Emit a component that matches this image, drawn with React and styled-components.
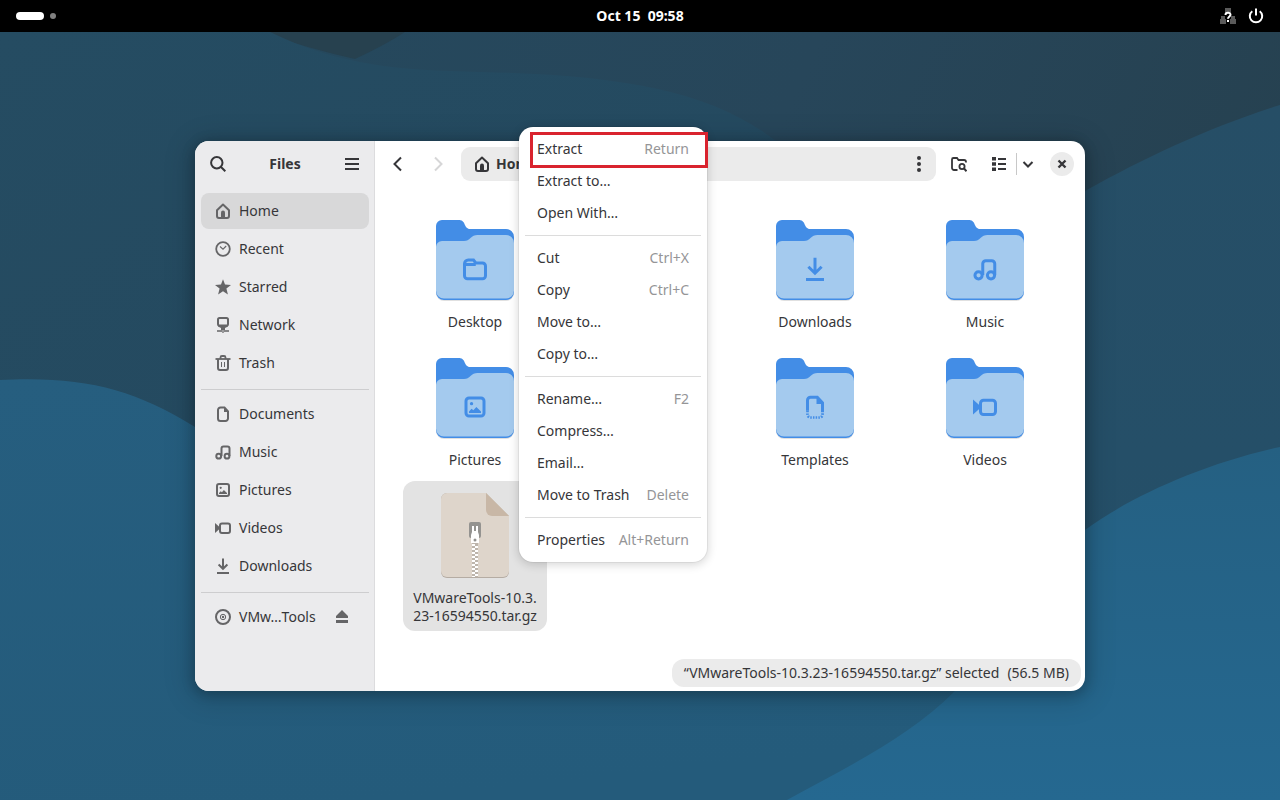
import React, { useState } from "react"
import styled, { createGlobalStyle } from "styled-components"

const places = [
  { title: "Home", icon: "home" },
  { title: "Recent", icon: "recent" },
  { title: "Starred", icon: "star" },
  { title: "Network", icon: "network" },
  { title: "Trash", icon: "trash" },
]

const bookmarks = [
  { title: "Documents", icon: "document" },
  { title: "Music", icon: "music" },
  { title: "Pictures", icon: "picture" },
  { title: "Videos", icon: "video" },
  { title: "Downloads", icon: "download" },
]

const folders = [
  { title: "Desktop", icon: "folder" },
  { title: "Documents", icon: "document" },
  { title: "Downloads", icon: "download" },
  { title: "Music", icon: "music" },
  { title: "Pictures", icon: "picture" },
  { title: "Public", icon: "folder" },
  { title: "Templates", icon: "template" },
  { title: "Videos", icon: "video" },
]

const menuGroups = [
  [
    { title: "Extract", keys: "Return", marked: true },
    { title: "Extract to…" },
    { title: "Open With…" },
  ],
  [
    { title: "Cut", keys: "Ctrl+X" },
    { title: "Copy", keys: "Ctrl+C" },
    { title: "Move to…" },
    { title: "Copy to…" },
  ],
  [
    { title: "Rename…", keys: "F2" },
    { title: "Compress…" },
    { title: "Email…" },
    { title: "Move to Trash", keys: "Delete" },
  ],
  [{ title: "Properties", keys: "Alt+Return" }],
]

// 16x16 symbolic icons, drawn with currentColor
const glyphs = {
  home: (
    <>
      <path d="M2 7.2 8 1.6l6 5.6V13a2 2 0 0 1-2 2H4a2 2 0 0 1-2-2z" strokeLinejoin="round" />
      <path d="M6 15V9.5a2 2 0 0 1 4 0V15z" fill="currentColor" stroke="none" />
    </>
  ),
  recent: (
    <>
      <circle cx="8" cy="8" r="6.8" strokeWidth="1.8" />
      <path d="m5 5.5 3 2.7 3.2-3.2" strokeWidth="1.1" />
    </>
  ),
  star: (
    <path d="M8 .3 10 5.6l6 .3-4.6 3.7 1.5 6L8 12.2l-4.9 3.4 1.5-6L0 5.9l6-.3z" fill="currentColor" stroke="none" />
  ),
  network: (
    <>
      <rect x="3" y="1" width="10" height="7.5" rx="1.5" />
      <path d="M3 8h10v1.500L10 11v2H6v-2L3 9.500z" fill="currentColor" stroke="none" />
      <path d="M2 14h4.5M9.5 14H14" strokeWidth="1.5" />
      <circle cx="8" cy="14" r="1.3" strokeWidth="1" />
    </>
  ),
  trash: (
    <>
      <path d="M.5 4h15" strokeWidth="1.8" />
      <path d="M5.5 4V2.5A1.500 1.500 0 0 1 7 1h2a1.500 1.500 0 0 1 1.500 1.500V4" strokeWidth="1.8" />
      <path d="M3 4v9a2 2 0 0 0 2 2h6a2 2 0 0 0 2-2V4" />
      <path d="M6.500 7v5M9.500 7v5" strokeWidth="1" />
    </>
  ),
  document: (
    <>
      <path d="M3 4a2.500 2.500 0 0 1 2.500-2.500H9.500L13 5.300V12.500A2.500 2.500 0 0 1 10.500 15h-5A2.500 2.500 0 0 1 3 12.500z" />
      <path d="M9 2v4h4.500z" fill="currentColor" stroke="none" />
    </>
  ),
  template: (
    <>
      <path d="M3 10.500V3.500A2 2 0 0 1 5 1.500h4.500L13 5.300v6.200" />
      <path d="M9 2v4h4.500z" fill="currentColor" stroke="none" />
      <path d="M3 10.500v2.500a2 2 0 0 0 2 2h6a2 2 0 0 0 2-2v-1.500" strokeWidth="1.800" strokeDasharray="1 .8" />
    </>
  ),
  music: (
    <>
      <circle cx="3.7" cy="12.200" r="2.400" />
      <circle cx="12" cy="12.200" r="2.400" />
      <path d="M6.500 12V4.500a2 2 0 0 1 2-2h4a2 2 0 0 1 2 2V12" />
    </>
  ),
  picture: (
    <>
      <rect x="2" y="2" width="12" height="12" rx="2" />
      <circle cx="5.7" cy="5.800" r="1.100" fill="currentColor" stroke="none" />
      <path d="M4 12v-1l1.700-1.800 1.200 1 2-2.200 1.200 1.200 1.900 1.800v1z" fill="currentColor" stroke="none" />
    </>
  ),
  video: (
    <>
      <rect x="5" y="3.500" width="10" height="9.500" rx="2" />
      <path d="M0 3v10l4.500-4V7z" fill="currentColor" stroke="none" />
    </>
  ),
  download: (
    <>
      <path d="M8 .5v10M3.600 6.500 8 10.800l4.400-4.300" />
      <path d="M2 15h12" />
    </>
  ),
  folder: (
    <path d="M1 4.500A2.500 2.500 0 0 1 3.500 2H7l1.500 2H13a2 2 0 0 1 2 2v6.500a2 2 0 0 1-2 2H3a2 2 0 0 1-2-2zM1.500 5h7" />
  ),
  disc: (
    <>
      <circle cx="8" cy="8" r="7" />
      <circle cx="8" cy="8" r="2.700" strokeWidth="1" />
      <circle cx="8" cy="8" r="1.200" fill="currentColor" stroke="none" />
    </>
  ),
  eject: (
    <path d="M8 1 14 7v2H2V7zM2 11h12v3H2z" fill="currentColor" stroke="none" />
  ),
  search: (
    <>
      <circle cx="6.800" cy="6.800" r="5.700" />
      <path d="m11 11 4.300 4.300" />
    </>
  ),
  menu: <path d="M1 3h14M1 8h14M1 13h14" />,
  back: <path d="M11 1.500 4.500 8l6.500 6.500" />,
  forward: <path d="M5 1.500 11.500 8 5 14.500" />,
  more: (
    <g fill="currentColor" stroke="none">
      <circle cx="8" cy="2" r="2" />
      <circle cx="8" cy="8" r="2" />
      <circle cx="8" cy="14" r="2" />
    </g>
  ),
  folderSearch: (
    <>
      <path d="M6.500 14H3a2 2 0 0 1-2-2V3.500A1.500 1.500 0 0 1 2.500 2H6l1.500 2H13a2 2 0 0 1 2 2v.5" strokeWidth="1.800" />
      <circle cx="11" cy="10.500" r="2.600" strokeWidth="1.800" />
      <path d="m13 12.500 2.500 2.700" />
    </>
  ),
  list: (
    <>
      <path d="M7 3h8M7 8h8M7 13h8" />
      <path d="M1 1h4v3.600H1zM1 6.200h4v3.600H1zM1 11.400h4V15H1z" fill="currentColor" stroke="none" />
    </>
  ),
  down: <path d="M3.500 6 8 10.500 12.500 6" />,
  close: <path d="m4.500 4.500 7 7M11.500 4.500l-7 7" strokeWidth="2.400" />,
  power: (
    <>
      <path d="M4.300 3.200a6.200 6.200 0 1 0 7.400 0" />
      <path d="M8 .5v7" />
    </>
  ),
}

const Glyph = ({ name, size = 16, ...rest }) => (
  <svg width={size} height={size} viewBox="0 0 16 16" fill="none" stroke="currentColor" strokeWidth="2" aria-hidden="true" {...rest}>
    {glyphs[name]}
  </svg>
)

const WiredUnknown = () => (
  <svg width="16" height="16" viewBox="0 0 16 16" aria-hidden="true">
    <path d="M5 0h6v5H5zM1 8h4v3h1v5H0v-5h1zM11 8h4v3h1v5h-6v-5h1z" fill="#5a5a5a" />
    <path d="M5.500 7C5.500 4 10.500 4 10.500 6.800 10.500 8.500 8 8.500 8 10.800" fill="none" stroke="#fff" strokeWidth="2" />
    <path d="M7 12h2v2H7z" fill="#fff" />
  </svg>
)

const FolderArt = ({ icon }) => (
  <svg width="96" height="96" viewBox="0 0 96 96" aria-hidden="true">
    <path d="M9 82V30h78v52a8 8 0 0 1-8 8H17a8 8 0 0 1-8-8z" fill="#000" opacity=".12" />
    <path d="M9 81V15a6 6 0 0 1 6-6h16c4 0 5.500 1.500 6.500 4s2.500 5 5.500 5H79a8 8 0 0 1 8 8v55a8 8 0 0 1-8 8H17a8 8 0 0 1-8-8z" fill="#438de6" />
    <path d="M9 79V36a6 6 0 0 1 6-6h22c3 0 4.500-1 6.500-3s4-3 7-3H79a8 8 0 0 1 8 8v47.500a8 8 0 0 1-8 8H17a8 8 0 0 1-8-8z" fill="#a4caee" />
    <Glyph name={icon} size={24} x="36" y="46" color="#438de6" />
  </svg>
)

const ArchiveArt = () => (
  <svg width="96" height="96" viewBox="0 0 96 96" aria-hidden="true">
    <path d="M14 12a6 6 0 0 1 6-6h39l23 23v56a6 6 0 0 1-6 6H20a6 6 0 0 1-6-6z" fill="#b5aca3" />
    <path d="M14 12a6 6 0 0 1 6-6h39l23 23v55a6 6 0 0 1-6 6H20a6 6 0 0 1-6-6z" fill="#ded5cb" />
    <path d="M59 6v17a6 6 0 0 0 6 6h17z" fill="#c8b7a6" />
    <path d="M42 37a2 2 0 0 1 2-2h8a2 2 0 0 1 2 2v12a2 2 0 0 1-2 2h-8a2 2 0 0 1-2-2z" fill="#949390" />
    <path d="M45 56h6v34h-6z" fill="#bdb5ac" />
    <path d="M46.500 57v33" stroke="#fff" strokeWidth="3" strokeDasharray="2 2" />
    <path d="M49.500 59v31" stroke="#fff" strokeWidth="3" strokeDasharray="2 2" />
    <path d="M45 39h2v5h2v-5h2v6l1 3v8h-8v-8l1-3z" fill="#fff" />
    <circle cx="48" cy="53" r="1.500" fill="#949390" />
  </svg>
)

const Wallpaper = () => (
  <Backdrop viewBox="0 0 1280 800" preserveAspectRatio="none" aria-hidden="true">
    <defs>
      <linearGradient id="night" x1="0" y1="0" x2="1" y2="0.3">
        <stop offset="0.1" stopColor="#25495e" />
        <stop offset="0.6" stopColor="#27465a" />
        <stop offset="1" stopColor="#264150" />
      </linearGradient>
      <linearGradient id="ridge" x1="0" y1="0" x2="0.6" y2="1">
        <stop offset="0" stopColor="#254c62" />
        <stop offset="1" stopColor="#24485e" />
      </linearGradient>
      <linearGradient id="slope" x1="0" y1="0" x2="0" y2="1">
        <stop offset="0" stopColor="#264e66" />
        <stop offset="1" stopColor="#24506a" />
      </linearGradient>
      <linearGradient id="lake" x1="0" y1="0" x2="0.3" y2="1">
        <stop offset="0" stopColor="#265e7f" />
        <stop offset="1" stopColor="#245b7b" />
      </linearGradient>
      <linearGradient id="shore" x1="0" y1="0" x2="0" y2="1">
        <stop offset="0" stopColor="#256082" />
        <stop offset="1" stopColor="#256890" />
      </linearGradient>
    </defs>
    <path d="M0 0h1280v800H0z" fill="url(#night)" />
    <path d="M260 32h145q-18 12-50 27-45-10-95-27z" fill="#27414f" />
    <path d="M0 32h270c70 34 130 38 210 40 140 3 230 18 296 69v659H0z" fill="url(#ridge)" />
    <path d="M1280 105c-72 23-132 51-195 86-160 100-180 300-180 609h375z" fill="url(#slope)" />
    <path d="M0 380c82-4 132 8 195 47 110 66 180 190 420 190 220 0 400-50 665-50v233H0z" fill="url(#lake)" />
    <path d="M1280 447c-78 17-150 50-195 83-60 44-78 110-130 161-45 45-100 72-168 109h493z" fill="url(#shore)" />
  </Backdrop>
)

const App = () => {

  const [current, setCurrent] = useState("Home")

  return (
    <Screen>
      <GlobalStyle />
      <Wallpaper />

      <TopBar>
        <Workspaces aria-label="Activities"><Pill /><Dot /></Workspaces>
        <Clock>Oct 15&nbsp; 09:58</Clock>
        <Tray aria-label="System">
          <WiredUnknown />
          <Glyph name="power" />
        </Tray>
      </TopBar>

      <Desk>
        <Window>
          <Sidebar>
            <HeaderBar>
              <IconButton aria-label="Search"><Glyph name="search" /></IconButton>
              <Title>Files</Title>
              <IconButton aria-label="Main menu"><Glyph name="menu" /></IconButton>
            </HeaderBar>

            <PlaceList>
              {places.map((item) => (
                <Place key={item.title} $active={item.title === current} onClick={() => setCurrent(item.title)}>
                  <Glyph name={item.icon} />
                  <span>{item.title}</span>
                </Place>
              ))}
              <PlaceDivider />
              {bookmarks.map((item) => (
                <Place key={item.title} $active={item.title === current} onClick={() => setCurrent(item.title)}>
                  <Glyph name={item.icon} />
                  <span>{item.title}</span>
                </Place>
              ))}
              <PlaceDivider />
              <Drive>
                <Place>
                  <Glyph name="disc" />
                  <span>VMw…Tools</span>
                </Place>
                <Eject aria-label="Eject"><Glyph name="eject" /></Eject>
              </Drive>
            </PlaceList>
          </Sidebar>

          <Main>
            <HeaderBar>
              <IconButton aria-label="Back"><Glyph name="back" /></IconButton>
              <IconButton aria-label="Forward" disabled><Glyph name="forward" /></IconButton>
              <PathBar>
                <Crumb><Glyph name="home" />Home</Crumb>
                <IconButton aria-label="Folder menu"><Glyph name="more" /></IconButton>
              </PathBar>
              <IconButton aria-label="Search this folder"><Glyph name="folderSearch" /></IconButton>
              <ViewSwitch>
                <IconButton aria-label="List view"><Glyph name="list" /></IconButton>
                <ViewOptions aria-label="View options"><Glyph name="down" /></ViewOptions>
              </ViewSwitch>
              <IconButton aria-label="Close"><CloseDisc><Glyph name="close" /></CloseDisc></IconButton>
            </HeaderBar>

            <FileGrid>
              {folders.map((item) => (
                <FileCell key={item.title}>
                  <FolderArt icon={item.icon} />
                  <span>{item.title}</span>
                </FileCell>
              ))}
              <FileCell $selected>
                <ArchiveArt />
                <span>VMwareTools-10.3.<br />23-16594550.tar.gz</span>
              </FileCell>
            </FileGrid>

            <Status>
              <span>“VMwareTools-10.3.23-16594550.tar.gz” selected</span>
              <span>(56.5 MB)</span>
            </Status>
          </Main>

          <ContextMenu role="menu">
            {menuGroups.map((group, index) => (
              <MenuGroup key={index}>
                {group.map((item) => (
                  <MenuItem key={item.title} role="menuitem" $marked={item.marked}>
                    <span>{item.title}</span>
                    {item.keys ? <Keys>{item.keys}</Keys> : null}
                  </MenuItem>
                ))}
              </MenuGroup>
            ))}
          </ContextMenu>
        </Window>
      </Desk>
    </Screen>
  )
}

export default App

const GlobalStyle = createGlobalStyle`
  * {
    box-sizing: border-box;
  }

  body {
    margin: 0;
    background: #25495e;
    color: #363639;
    font-family: "Noto Sans", "Open Sans", sans-serif;
    font-size: 14px;
    line-height: 18px;
  }

  button {
    margin: 0;
    padding: 0;
    border: none;
    background: none;
    color: inherit;
    font: inherit;
    cursor: pointer;
  }

  svg {
    display: block;
    flex-shrink: 0;
  }
`

const Screen = styled.div`
  position: relative;
  display: flex;
  flex-direction: column;
  min-height: 100vh;
`

const Backdrop = styled.svg`
  position: absolute;
  top: 0;
  left: 0;
  width: 100%;
  height: 100%;
  z-index: -1;
`

const TopBar = styled.header`
  display: grid;
  grid-template-columns: 1fr auto 1fr;
  align-items: center;
  height: 32px;
  padding: 0 16px;
  background: #000;
  color: #fff;
`

const Workspaces = styled.button`
  display: flex;
  align-items: center;
  justify-self: start;
  gap: 6px;
`

const Pill = styled.span`
  width: 28px;
  height: 8px;
  border-radius: 4px;
  background: #fff;
`

const Dot = styled.span`
  width: 6px;
  height: 6px;
  border-radius: 3px;
  background: #808080;
`

const Clock = styled.button`
  font-weight: 700;
`

const Tray = styled.button`
  display: flex;
  justify-self: end;
  gap: 12px;
`

const Desk = styled.main`
  display: flex;
  flex: 1;
  align-items: center;
  justify-content: center;
`

const Window = styled.section`
  position: relative;
  display: flex;
  width: 100%;
  max-width: 890px;
  min-height: 550px;
  border-radius: 14px;
  background: #fff;
  box-shadow: 0 2px 12px 2px rgba(0, 0, 0, 0.2), 0 4px 28px 6px rgba(0, 0, 0, 0.14);
`

const Sidebar = styled.aside`
  flex: 0 0 180px;
  border-radius: 14px 0 0 14px;
  background: #ebebed;
  box-shadow: inset -1px 0 #dcdcde;
`

const HeaderBar = styled.div`
  display: flex;
  align-items: center;
  gap: 6px;
  height: 46px;
  padding: 6px;
`

const IconButton = styled.button`
  display: flex;
  align-items: center;
  justify-content: center;
  flex: 0 0 34px;
  height: 34px;

  &:disabled {
    color: #d6d6d7;
  }
`

const Title = styled.h1`
  flex: 1;
  margin: 0;
  font-size: 14px;
  font-weight: 700;
  text-align: center;
`

const PlaceList = styled.nav`
  display: flex;
  flex-direction: column;
  gap: 2px;
  padding: 6px;
`

const Place = styled.button`
  display: flex;
  align-items: center;
  gap: 8px;
  height: 36px;
  padding: 0 14px;
  border-radius: 8px;
  background: ${({ $active }) => ($active ? "#d8d8d9" : "transparent")};

  svg {
    color: #656567;
  }
`

const PlaceDivider = styled.hr`
  width: 100%;
  height: 1px;
  margin: 6px 0 4px;
  border: none;
  background: #cdcdcf;
`

const Drive = styled.div`
  display: flex;
  align-items: center;
  justify-content: space-between;
  padding-right: 19px;
`

const Eject = styled.button`
  color: #656567;
`

const Main = styled.div`
  display: flex;
  flex: 1;
  flex-direction: column;
  min-width: 0;
`

const PathBar = styled.div`
  display: flex;
  align-items: center;
  justify-content: space-between;
  flex: 1;
  height: 34px;
  border-radius: 9px;
  background: #ebebeb;
`

const Crumb = styled.button`
  display: flex;
  align-items: center;
  gap: 6px;
  padding-left: 13px;
  font-weight: 700;
`

const ViewSwitch = styled.div`
  display: flex;
  align-items: center;
`

const ViewOptions = styled.button`
  display: flex;
  align-items: center;
  justify-content: center;
  width: 23px;
  height: 22px;
  border-left: 1px solid #c8c8c8;
`

const CloseDisc = styled.span`
  display: flex;
  align-items: center;
  justify-content: center;
  width: 24px;
  height: 24px;
  border-radius: 50%;
  background: #ebebeb;
`

const FileGrid = styled.div`
  display: grid;
  grid-template-columns: repeat(4, 1fr);
  gap: 6px 26px;
  padding: 18px 28px;
`

const FileCell = styled.button`
  display: flex;
  flex-direction: column;
  align-items: center;
  gap: 6px;
  padding: 6px;
  border-radius: 12px;
  background: ${({ $selected }) => ($selected ? "#e3e3e3" : "transparent")};
`

const Status = styled.div`
  display: flex;
  align-self: flex-end;
  gap: 8px;
  margin: auto 4px 4px 0;
  padding: 5px 12px;
  border-radius: 12px;
  background: #ebebeb;
`

const ContextMenu = styled.div`
  position: absolute;
  top: -14px;
  left: 324px;
  width: 188px;
  padding: 6px;
  border-radius: 14px;
  background: #fff;
  box-shadow: 0 0 0 1px rgba(0, 0, 0, 0.05), 0 2px 10px 1px rgba(0, 0, 0, 0.16);
`

const MenuGroup = styled.div`
  & + & {
    margin-top: 6px;
    padding-top: 6px;
    border-top: 1px solid #dcdcdc;
  }
`

const MenuItem = styled.button`
  position: relative;
  display: flex;
  align-items: center;
  justify-content: space-between;
  width: 100%;
  height: 32px;
  padding: 0 12px;
  white-space: nowrap;

  /* red frame around the suggested action */
  &::after {
    content: "";
    display: ${({ $marked }) => ($marked ? "block" : "none")};
    position: absolute;
    top: -1px;
    right: -7px;
    bottom: -3px;
    left: 5px;
    border: 3px solid #d9232e;
  }
`

const Keys = styled.span`
  color: #959597;
`
